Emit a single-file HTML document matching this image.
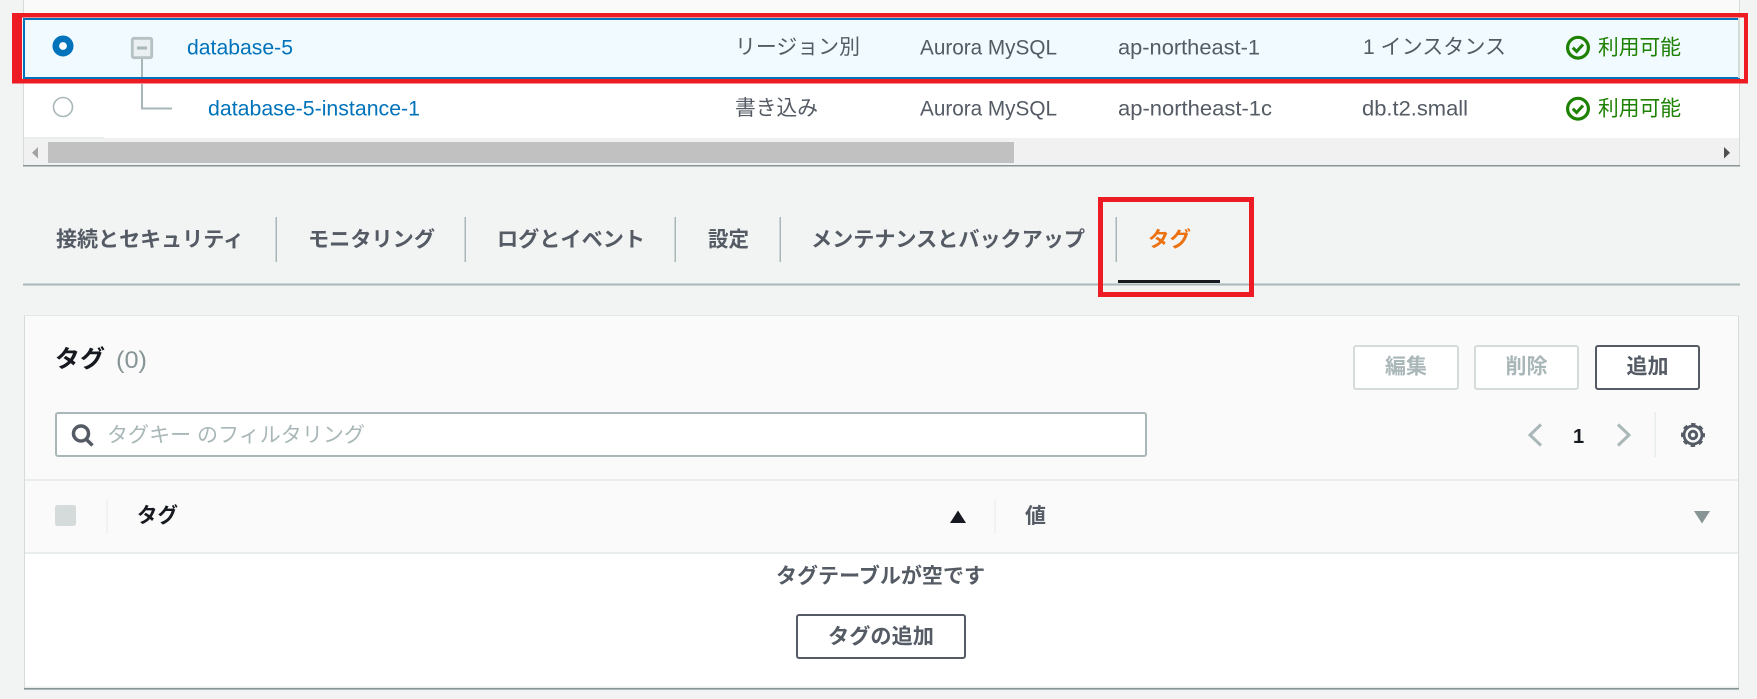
<!DOCTYPE html>
<html lang="ja">
<head>
<meta charset="utf-8">
<title>タグ</title>
<style>
html,body{margin:0;padding:0;width:1757px;height:699px;overflow:hidden;background:#f2f3f3}
svg{display:block}
text{font-family:"Liberation Sans","Noto Sans CJK JP",sans-serif;font-size:21px;fill:#545b64;white-space:pre}
.b{font-weight:700}
.l{fill:#0073bb}
.g{fill:#1d8102}
</style>
</head>
<body>
<svg width="1757" height="699" viewBox="0 0 1757 699" xmlns="http://www.w3.org/2000/svg">
<rect width="1757" height="699" fill="#f2f3f3"/>

<!-- top card -->
<g shape-rendering="crispEdges">
<rect x="23" y="0" width="1717" height="166" fill="#d5dbdb"/>
<rect x="23" y="165" width="1717" height="1.5" fill="#879596"/>
<rect x="24" y="0" width="1715" height="18" fill="#fafafa"/>
<rect x="24" y="18" width="1715" height="61" fill="#f1faff"/>
<rect x="24" y="79" width="1715" height="59" fill="#fff"/>
<rect x="24" y="138" width="1715" height="27" fill="#f1f1f1"/>
<rect x="24" y="137" width="80" height="2" fill="#eaeded"/>
<rect x="48" y="142" width="966" height="21" fill="#c1c1c1"/>
<rect x="23" y="18" width="1717" height="2" fill="#0073bb"/>
<rect x="23" y="77" width="1717" height="2" fill="#0073bb"/>
<rect x="23" y="18" width="2" height="59" fill="#0073bb"/>
<rect x="1738" y="18" width="2" height="60" fill="#d5dbdb"/>
</g>
<path d="M38 147v11.500l-6-5.750z" fill="#a3a3a3"/>
<path d="M1724 147v11.500l6-5.750z" fill="#505050"/>

<!-- red box 1 -->
<g fill="#ed1c24" shape-rendering="crispEdges">
<rect x="12" y="13" width="1736" height="4.500"/>
<rect x="12" y="79" width="1736" height="4.500"/>
<rect x="12" y="13" width="10" height="70.500"/>
<rect x="1744" y="13" width="4" height="70.500"/>
</g>

<!-- radios -->
<circle cx="63" cy="46" r="7.200" fill="#fff" stroke="#0073bb" stroke-width="6.600"/>
<circle cx="63" cy="107" r="9.500" fill="#fff" stroke="#aab7b8" stroke-width="1.600"/>

<!-- tree -->
<rect x="132.300" y="38.300" width="19.400" height="19.400" rx="1.500" fill="#eaf0f2" stroke="#b5c1c2" stroke-width="2.800"/>
<rect x="137" y="46.500" width="10" height="3" fill="#aab7b8"/>
<rect x="141" y="59" width="2" height="18" fill="#aab7b8"/>
<path d="M142 84V108.500H172" fill="none" stroke="#aab7b8" stroke-width="2"/>

<!-- row text -->
<text class="l" x="187" y="54.500" textLength="106" lengthAdjust="spacingAndGlyphs">database-5</text>
<text x="735" y="54" textLength="125" lengthAdjust="spacingAndGlyphs">リージョン別</text>
<text x="920" y="54.500" textLength="137" lengthAdjust="spacingAndGlyphs">Aurora MySQL</text>
<text x="1118" y="54.500" textLength="142" lengthAdjust="spacingAndGlyphs">ap-northeast-1</text>
<text x="1363" y="54" textLength="143" lengthAdjust="spacingAndGlyphs">1 インスタンス</text>
<circle cx="1578" cy="47.700" r="10.400" fill="none" stroke="#1d8102" stroke-width="3.200"/>
<path d="M1572.800 47.700l3.800 3.800 6.400-7" fill="none" stroke="#1d8102" stroke-width="3"/>
<text class="g" x="1598" y="54.500" textLength="83" lengthAdjust="spacingAndGlyphs">利用可能</text>

<text class="l" x="208" y="115.500" textLength="212" lengthAdjust="spacingAndGlyphs">database-5-instance-1</text>
<text x="735" y="115" textLength="83" lengthAdjust="spacingAndGlyphs">書き込み</text>
<text x="920" y="115.500" textLength="137" lengthAdjust="spacingAndGlyphs">Aurora MySQL</text>
<text x="1118" y="115.500" textLength="154" lengthAdjust="spacingAndGlyphs">ap-northeast-1c</text>
<text x="1362" y="115.500" textLength="106" lengthAdjust="spacingAndGlyphs">db.t2.small</text>
<circle cx="1578" cy="108.700" r="10.400" fill="none" stroke="#1d8102" stroke-width="3.200"/>
<path d="M1572.800 108.700l3.800 3.800 6.400-7" fill="none" stroke="#1d8102" stroke-width="3"/>
<text class="g" x="1598" y="115.500" textLength="83" lengthAdjust="spacingAndGlyphs">利用可能</text>

<!-- tabs -->
<g shape-rendering="crispEdges" fill="#aab7b8">
<rect x="275.500" y="217" width="1.500" height="45"/>
<rect x="464.500" y="217" width="1.500" height="45"/>
<rect x="674.500" y="217" width="1.500" height="45"/>
<rect x="779.500" y="217" width="1.500" height="45"/>
<rect x="1115.500" y="217" width="1.500" height="45"/>
<rect x="23" y="283.500" width="1717" height="2"/>
</g>
<text class="b" x="56" y="246.500" textLength="188" lengthAdjust="spacingAndGlyphs">接続とセキュリティ</text>
<text class="b" x="308" y="246.500" textLength="127" lengthAdjust="spacingAndGlyphs">モニタリング</text>
<text class="b" x="497" y="246.500" textLength="148" lengthAdjust="spacingAndGlyphs">ログとイベント</text>
<text class="b" x="708" y="246.500" textLength="41" lengthAdjust="spacingAndGlyphs">設定</text>
<text class="b" x="811" y="246.500" textLength="274" lengthAdjust="spacingAndGlyphs">メンテナンスとバックアップ</text>
<text class="b" x="1148" y="246.500" textLength="43" lengthAdjust="spacingAndGlyphs" style="fill:#ec7211">タグ</text>
<rect x="1118" y="280" width="102" height="3" fill="#16191f" shape-rendering="crispEdges"/>

<!-- red box 2 -->
<rect x="1100.500" y="199.500" width="151" height="95" fill="none" stroke="#ed1c24" stroke-width="5" shape-rendering="crispEdges"/>

<!-- panel -->
<g shape-rendering="crispEdges">
<rect x="24" y="315.500" width="1715" height="374.500" fill="#d5dbdb"/>
<rect x="25" y="316" width="1713" height="372" fill="#fff"/>
<rect x="25" y="316" width="1713" height="237" fill="#fafafa"/>
<rect x="25" y="479" width="1713" height="2" fill="#eaeded"/>
<rect x="25" y="552" width="1713" height="2" fill="#eaeded"/>
<rect x="24" y="688" width="1715" height="1.500" fill="#879596"/>
<rect x="25" y="686.500" width="1713" height="1.500" fill="#eaeded"/>
</g>

<text class="b" x="55" y="367" style="font-size:24px;fill:#16191f" textLength="50" lengthAdjust="spacingAndGlyphs">タグ</text>
<text x="116" y="368" style="font-size:24px;fill:#879596" textLength="31" lengthAdjust="spacingAndGlyphs">(0)</text>

<!-- filter -->
<rect x="56" y="413" width="1090" height="43" rx="2" fill="#fff" stroke="#aab7b8" stroke-width="2"/>
<circle cx="81" cy="433.500" r="7.500" fill="none" stroke="#545b64" stroke-width="3.500"/>
<path d="M86.500 439.500l6 6" stroke="#545b64" stroke-width="3.500" fill="none"/>
<text x="107" y="442" style="fill:#aab7b8" textLength="258" lengthAdjust="spacingAndGlyphs">タグキー のフィルタリング</text>

<!-- buttons -->
<rect x="1354" y="346" width="104" height="43" rx="2" fill="#fff" stroke="#d5dbdb" stroke-width="2"/>
<text class="b" x="1385" y="373.500" style="fill:#aab7b8" textLength="42" lengthAdjust="spacingAndGlyphs">編集</text>
<rect x="1475" y="346" width="103" height="43" rx="2" fill="#fff" stroke="#d5dbdb" stroke-width="2"/>
<text class="b" x="1505.500" y="373.500" style="fill:#aab7b8" textLength="42" lengthAdjust="spacingAndGlyphs">削除</text>
<rect x="1596" y="346" width="103" height="43" rx="2" fill="#fff" stroke="#545b64" stroke-width="2"/>
<text class="b" x="1626.500" y="373.500" textLength="42" lengthAdjust="spacingAndGlyphs">追加</text>

<!-- pagination -->
<path d="M1541 424.500l-11 10.500 11 10.500" fill="none" stroke="#aab7b8" stroke-width="3"/>
<text class="b" x="1573" y="443" style="font-size:20px;fill:#16191f">1</text>
<path d="M1618 424.500l11 10.500-11 10.500" fill="none" stroke="#aab7b8" stroke-width="3"/>
<rect x="1654.500" y="412" width="1.500" height="45" fill="#eaeded" shape-rendering="crispEdges"/>

<!-- gear -->
<g transform="translate(1693 435)" fill="none" stroke="#545b64">
<circle r="3.700" stroke-width="3"/>
<circle r="9" stroke-width="2.800"/>
<circle r="10.800" stroke-width="2.400" stroke-dasharray="4.480 4" stroke-dashoffset="2.240"/>
</g>

<!-- table head -->
<rect x="55" y="505" width="21" height="21" rx="2.500" fill="#d5dbdb"/>
<rect x="106.500" y="499" width="1" height="35" fill="#eaeded" shape-rendering="crispEdges"/>
<text class="b" x="137" y="522.500" style="fill:#16191f" textLength="41" lengthAdjust="spacingAndGlyphs">タグ</text>
<path d="M958 510.500l8 12.500h-16z" fill="#16191f"/>
<rect x="994.500" y="499" width="1" height="35" fill="#eaeded" shape-rendering="crispEdges"/>
<text class="b" x="1025" y="523" textLength="21" lengthAdjust="spacingAndGlyphs">値</text>
<path d="M1702 523.500l-8-12.500h16z" fill="#879596"/>

<!-- empty -->
<text class="b" x="776" y="583" textLength="209" lengthAdjust="spacingAndGlyphs">タグテーブルが空です</text>
<rect x="797" y="615" width="168" height="43" rx="2" fill="#fff" stroke="#545b64" stroke-width="2"/>
<text class="b" x="828" y="643.500" textLength="106" lengthAdjust="spacingAndGlyphs">タグの追加</text>
</svg>
</body>
</html>
